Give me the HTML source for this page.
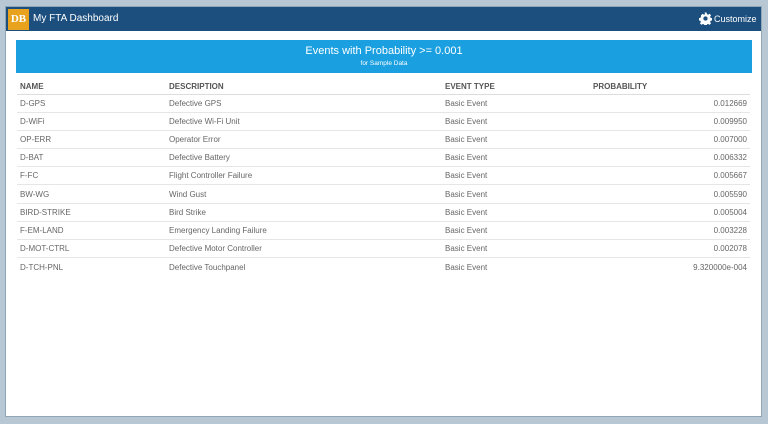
<!DOCTYPE html>
<html><head><meta charset="utf-8"><style>
*{margin:0;padding:0;box-sizing:border-box}
body{width:768px;height:424px;background:#b7c7d4;font-family:"Liberation Sans",sans-serif;position:relative;overflow:hidden}
.frame{position:absolute;left:5px;top:6px;width:757px;height:411px;background:#fff;border:1px solid #8fa6b8}
.hdr{position:absolute;left:0;top:0;width:100%;height:24px;background:#1c4f7e;color:#fff}
.logo{position:absolute;left:2px;top:2px;width:21px;height:21px;background:#e8a21d;color:#fff;font-family:"Liberation Serif",serif;font-weight:bold;font-size:11px;line-height:21px;text-align:center}
.title{position:absolute;left:27px;top:6px;font-size:10px}
.cust{position:absolute;left:708px;top:7px;font-size:9px}
.gear{position:absolute;left:693px;top:5px}
.banner{position:absolute;left:10px;top:33px;width:736px;height:33px;background:#1a9fe0;color:#fff;text-align:center}
.b1{font-size:11px;margin-top:5px}
.b2{font-size:6.5px;margin-top:3px}
table{position:absolute;left:11px;top:72px;width:733px;border-collapse:collapse;font-size:8px;color:#666}
th{text-align:left;font-weight:bold;color:#555;height:15px;border-bottom:1px solid #ddd;padding-left:3px}
td{height:18.2px;border-bottom:1px solid #e6e6e6;padding-left:3px}
td.r{text-align:right;padding-right:3px}
</style></head><body>
<div class="frame">
<div class="hdr"><div class="logo">DB</div><div class="title">My FTA Dashboard</div>
<svg class="gear" width="13" height="13" viewBox="0 0 24 24"><path fill="#fff" d="M10 1h4l.6 3 2.2 1 2.6-1.7 2.8 2.8-1.7 2.6 1 2.2 3 .6v4l-3 .6-1 2.2 1.7 2.6-2.8 2.8-2.6-1.7-2.2 1-.6 3h-4l-.6-3-2.200-1-2.6 1.7-2.8-2.8 1.7-2.6-1-2.2-3-.6v-4l3-.6 1-2.2L3.8 6.1 6.6 3.3l2.6 1.7 2.2-1z M12 8a4 4 0 1 0 0 8 4 4 0 1 0 0-8z" fill-rule="evenodd"/></svg>
<div class="cust">Customize</div></div>
<div class="banner"><div class="b1">Events with Probability &gt;= 0.001</div><div class="b2">for Sample Data</div></div>
<table>
<tr><th style="width:149px">NAME</th><th style="width:276px">DESCRIPTION</th><th style="width:148px">EVENT TYPE</th><th>PROBABILITY</th></tr>
<tr><td>D-GPS</td><td>Defective GPS</td><td>Basic Event</td><td class="r">0.012669</td></tr>
<tr><td>D-WiFi</td><td>Defective Wi-Fi Unit</td><td>Basic Event</td><td class="r">0.009950</td></tr>
<tr><td>OP-ERR</td><td>Operator Error</td><td>Basic Event</td><td class="r">0.007000</td></tr>
<tr><td>D-BAT</td><td>Defective Battery</td><td>Basic Event</td><td class="r">0.006332</td></tr>
<tr><td>F-FC</td><td>Flight Controller Failure</td><td>Basic Event</td><td class="r">0.005667</td></tr>
<tr><td>BW-WG</td><td>Wind Gust</td><td>Basic Event</td><td class="r">0.005590</td></tr>
<tr><td>BIRD-STRIKE</td><td>Bird Strike</td><td>Basic Event</td><td class="r">0.005004</td></tr>
<tr><td>F-EM-LAND</td><td>Emergency Landing Failure</td><td>Basic Event</td><td class="r">0.003228</td></tr>
<tr><td>D-MOT-CTRL</td><td>Defective Motor Controller</td><td>Basic Event</td><td class="r">0.002078</td></tr>
<tr><td style="border:none">D-TCH-PNL</td><td style="border:none">Defective Touchpanel</td><td style="border:none">Basic Event</td><td class="r" style="border:none">9.320000e-004</td></tr>
</table>
</div>
</body></html>
